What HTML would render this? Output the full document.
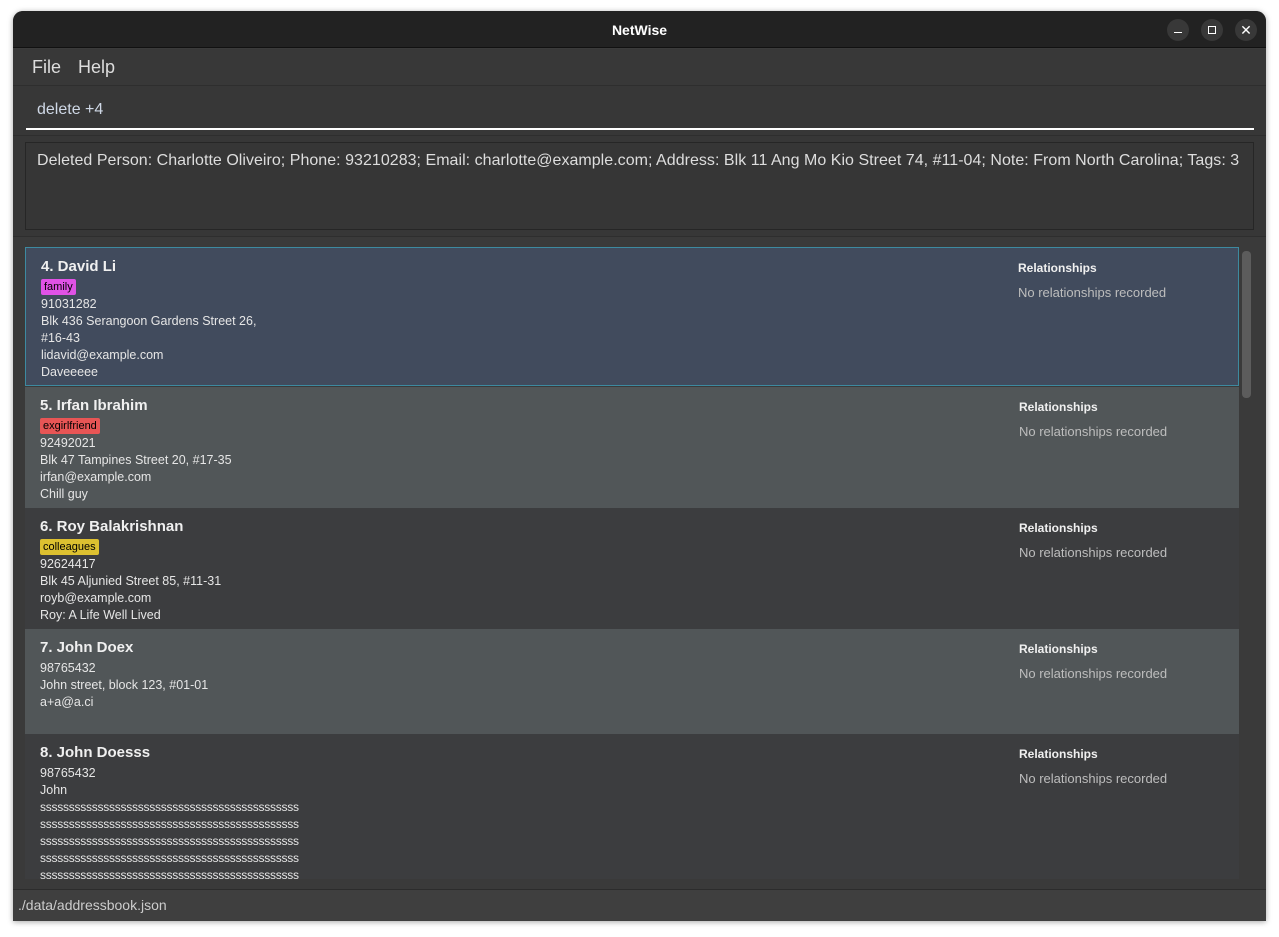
<!DOCTYPE html>
<html><head><meta charset="utf-8"><style>
*{margin:0;padding:0;box-sizing:border-box}
body{width:1279px;height:937px;background:#fff;font-family:"Liberation Sans",sans-serif;position:relative;overflow:hidden}
.win{position:absolute;left:13px;top:11px;width:1253px;height:910px;background:#3b3b3b;border-radius:10px 10px 0 0;overflow:hidden;box-shadow:0 1px 6px rgba(0,0,0,.35)}
.t{position:absolute;white-space:nowrap}
.title{left:0;top:0;width:1253px;height:37px;background:#222;border-bottom:1px solid #111}
.btn{position:absolute;top:8px;width:22px;height:22px;border-radius:50%;background:#383838}
.menu{left:0;top:38px;width:1253px;height:36px;background:#383838}
.cmd{left:0;top:74px;width:1253px;height:51px;background:#373737;border-top:1px solid #2e2e2e}
.res{left:12px;top:131px;width:1229px;height:88px;background:#363636;border:1px solid #262626}
.card{position:absolute;left:12px;width:1214px}
.nm{position:absolute;left:15px;font-size:15px;font-weight:bold;color:#f0f0f0;top:10px!important}
.ln{position:absolute;left:15px;font-size:12.5px;color:#e6e6e6;white-space:nowrap}
.tag{position:absolute;left:15px;font-size:11px;color:#000;padding:1px 3px;border-radius:2px;height:16px;line-height:14px}
.rh{position:absolute;left:994px;font-size:12px;font-weight:bold;color:#f0f0f0}
.rn{position:absolute;left:994px;font-size:13px;color:#bdbdbd}
.s{font-size:12px!important;letter-spacing:-0.25px}
</style></head><body>
<div class="win">
 <div class="t title"></div>
 <div class="t" style="left:0;width:1253px;top:11px;text-align:center;color:#fff;font-weight:bold;font-size:14px">NetWise</div>
 <div class="btn" style="left:1154px"><div style="position:absolute;left:7px;top:13px;width:8px;height:1px;background:#fff"></div></div>
 <div class="btn" style="left:1188px"><div style="position:absolute;left:7px;top:7px;width:8px;height:8px;border:1px solid #fff"></div></div>
 <div class="btn" style="left:1222px;color:#fff;font-size:14px;text-align:center;line-height:22px">✕</div>
 <div class="t menu"></div>
 <div class="t" style="left:19px;top:46px;color:#ddd;font-size:18px">File</div>
 <div class="t" style="left:65px;top:46px;color:#ddd;font-size:18px">Help</div>
 <div class="t cmd"></div>
 <div class="t" style="left:24px;top:90px;color:#cfd8e6;font-size:16px">delete +4</div>
 <div class="t" style="left:13px;top:117px;width:1228px;height:2px;background:#fff"></div>
 <div class="t" style="left:0;top:124px;width:1253px;height:102px;background:#373737;border-top:1px solid #2e2e2e"></div>
 <div class="t res"></div>
 <div class="t" style="left:24px;top:141px;color:#ddd;font-size:16px;letter-spacing:0.03px">Deleted Person: Charlotte Oliveiro; Phone: 93210283; Email: charlotte@example.com; Address: Blk 11 Ang Mo Kio Street 74, #11-04; Note: From North Carolina; Tags: 3</div>
 <div class="t" style="left:0;top:225px;width:1253px;height:653px;background:#3a3a3a;border-top:1px solid #2e2e2e"></div>
 <div class="t" style="left:1229px;top:240px;width:9px;height:147px;background:#5c5c5c;border-radius:4px"></div>

 <div class="card" style="top:236px;height:139px;background:#414b5d;border:1px solid #3d8aa0">
  <div class="nm" style="top:9px">4. David Li</div>
  <div class="tag" style="top:31px;background:#e052e6">family</div>
  <div class="ln" style="top:49px">91031282</div>
  <div class="ln" style="top:66px">Blk 436 Serangoon Gardens Street 26,</div>
  <div class="ln" style="top:83px">#16-43</div>
  <div class="ln" style="top:100px">lidavid@example.com</div>
  <div class="ln" style="top:117px">Daveeeee</div>
  <div class="rh" style="top:13px;left:992px">Relationships</div>
  <div class="rn" style="top:37px;left:992px">No relationships recorded</div>
 </div>
 <div class="card" style="top:376px;height:121px;background:#515658">
  <div class="nm" style="top:9px">5. Irfan Ibrahim</div>
  <div class="tag" style="top:31px;background:#e85555">exgirlfriend</div>
  <div class="ln" style="top:49px">92492021</div>
  <div class="ln" style="top:66px">Blk 47 Tampines Street 20, #17-35</div>
  <div class="ln" style="top:83px">irfan@example.com</div>
  <div class="ln" style="top:100px">Chill guy</div>
  <div class="rh" style="top:13px">Relationships</div>
  <div class="rn" style="top:37px">No relationships recorded</div>
 </div>
 <div class="card" style="top:497px;height:121px;background:#3c3d3f">
  <div class="nm" style="top:9px">6. Roy Balakrishnan</div>
  <div class="tag" style="top:31px;background:#dcc030">colleagues</div>
  <div class="ln" style="top:49px">92624417</div>
  <div class="ln" style="top:66px">Blk 45 Aljunied Street 85, #11-31</div>
  <div class="ln" style="top:83px">royb@example.com</div>
  <div class="ln" style="top:100px">Roy: A Life Well Lived</div>
  <div class="rh" style="top:13px">Relationships</div>
  <div class="rn" style="top:37px">No relationships recorded</div>
 </div>
 <div class="card" style="top:618px;height:105px;background:#515658">
  <div class="nm" style="top:9px">7. John Doex</div>
  <div class="ln" style="top:32px">98765432</div>
  <div class="ln" style="top:49px">John street, block 123, #01-01</div>
  <div class="ln" style="top:66px">a+a@a.ci</div>
  <div class="rh" style="top:13px">Relationships</div>
  <div class="rn" style="top:37px">No relationships recorded</div>
 </div>
 <div class="card" style="top:723px;height:145px;background:#3c3d3f;overflow:hidden">
  <div class="nm" style="top:9px">8. John Doesss</div>
  <div class="ln" style="top:32px">98765432</div>
  <div class="ln" style="top:49px">John</div>
  <div class="ln s" style="top:66px">sssssssssssssssssssssssssssssssssssssssssssss</div>
  <div class="ln s" style="top:83px">sssssssssssssssssssssssssssssssssssssssssssss</div>
  <div class="ln s" style="top:100px">sssssssssssssssssssssssssssssssssssssssssssss</div>
  <div class="ln s" style="top:117px">sssssssssssssssssssssssssssssssssssssssssssss</div>
  <div class="ln s" style="top:134px">sssssssssssssssssssssssssssssssssssssssssssss</div>
  <div class="rh" style="top:13px">Relationships</div>
  <div class="rn" style="top:37px">No relationships recorded</div>
 </div>
 <div class="t" style="left:0;top:878px;width:1253px;height:32px;background:#3f3f3f;border-top:1px solid #2c2c2c"></div>
 <div class="t" style="left:5px;top:886px;color:#ccc;font-size:14px">./data/addressbook.json</div>
</div>
</body></html>
